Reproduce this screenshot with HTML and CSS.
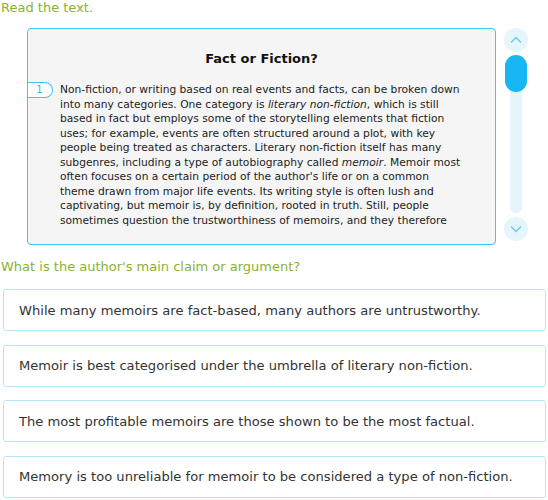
FILE: index.html
```
<!DOCTYPE html>
<html lang="en">
  <head>
    <meta charset="UTF-8" />
    <meta name="viewport" content="width=device-width, initial-scale=1.0" />
    <title>Fact or Fiction?</title>
    <link rel="stylesheet" href="styles.css">
  </head>
  <body>
    <p class="prompt">Read the text.</p>

    <div class="reader">
      <div class="passage">
        <div class="passage-scroll">
          <h2 class="passage-title">Fact or Fiction?</h2>
          <div class="para">
            <span class="para-num">1</span>
            <p>Non-fiction, or writing based on real events and facts, can be broken down into many categories. One category is <em>literary non-fiction</em>, which is still based in fact but employs some of the storytelling elements that fiction uses; for example, events are often structured around a plot, with key people being treated as characters. Literary non-fiction itself has many subgenres, including a type of autobiography called <em>memoir</em>. Memoir most often focuses on a certain period of the author's life or on a common theme drawn from major life events. Its writing style is often lush and captivating, but memoir is, by definition, rooted in truth. Still, people sometimes question the trustworthiness of memoirs, and they therefore wonder whether memoir really belongs under the umbrella of non-fiction at all.</p>
          </div>
        </div>
      </div>

      <div class="scrollbar">
        <div class="scroll-btn">
          <svg width="12" height="8" viewBox="0 0 12 8"><path d="M1 6.5 L6 1.5 L11 6.5" fill="none" stroke="#6cc6ee" stroke-width="1.3"/></svg>
        </div>
        <div class="scroll-track">
          <div class="scroll-thumb"></div>
        </div>
        <div class="scroll-btn">
          <svg width="12" height="8" viewBox="0 0 12 8"><path d="M1 1.5 L6 6.5 L11 1.5" fill="none" stroke="#6cc6ee" stroke-width="1.3"/></svg>
        </div>
      </div>
    </div>

    <p class="question">What is the author's main claim or argument?</p>

    <div class="choices">
      <div class="choice">While many memoirs are fact-based, many authors are untrustworthy.</div>
      <div class="choice">Memoir is best categorised under the umbrella of literary non-fiction.</div>
      <div class="choice">The most profitable memoirs are those shown to be the most factual.</div>
      <div class="choice">Memory is too unreliable for memoir to be considered a type of non-fiction.</div>
    </div>
  </body>
</html>
```

FILE: styles.css
```
body {
  margin: 0;
  background-color: #fff;
  font-family: "DejaVu Sans", Verdana, sans-serif;
  color: #333;
}
.prompt {
  margin: 0 0 0 1px;
  font-size: 13px;
  line-height: 16px;
  color: #8ab134;
}
.reader {
  display: flex;
  margin-top: 12px;
}
.passage {
  margin-left: 27px;
  width: 467px;
  height: 215px;
  background-color: #f5f5f5;
  border: 1px solid #38c8f4;
  border-radius: 4px;
}
.passage-scroll {
  height: 199px;
  overflow: hidden;
}
.passage-title {
  margin: 22px 0 15px;
  font-size: 13px;
  line-height: 16px;
  font-weight: bold;
  text-align: center;
  color: #111;
}
.para {
  display: flex;
  align-items: flex-start;
}
.para-num {
  flex-shrink: 0;
  width: 25px;
  height: 14px;
  margin-left: -1px;
  border: 1px solid #38c8f4;
  border-left: none;
  border-radius: 0 8px 8px 0;
  background-color: #fff;
  color: #38b6ea;
  font-size: 10px;
  line-height: 14px;
  text-align: center;
}
.para p {
  margin: 1px 0 0 7px;
  width: 404px;
  font-size: 10.7px;
  line-height: 14.5px;
  color: #222;
}
.scrollbar {
  display: flex;
  flex-direction: column;
  align-items: center;
  width: 24px;
  margin-left: 8px;
}
.scroll-btn {
  width: 24px;
  height: 24px;
  border-radius: 50%;
  background-color: #e4f5fb;
  display: flex;
  justify-content: center;
  align-items: center;
}
.scroll-track {
  width: 12px;
  height: 158px;
  margin: 3px 0 4px;
  border-radius: 6px;
  background-color: #e4f5fb;
  display: flex;
  justify-content: center;
}
.scroll-thumb {
  flex-shrink: 0;
  width: 22px;
  height: 37px;
  border-radius: 11px;
  background-color: #18b6f2;
}
.question {
  margin: 14px 0 0 1px;
  font-size: 13px;
  line-height: 16px;
  color: #8ab134;
}
.choices {
  margin: 14px 2px 0 3px;
}
.choice {
  height: 40px;
  margin-bottom: 13.5px;
  padding-left: 15px;
  border: 1px solid #b4e7fb;
  border-radius: 3px;
  display: flex;
  align-items: center;
  font-size: 13.1px;
  color: #333;
}
```
